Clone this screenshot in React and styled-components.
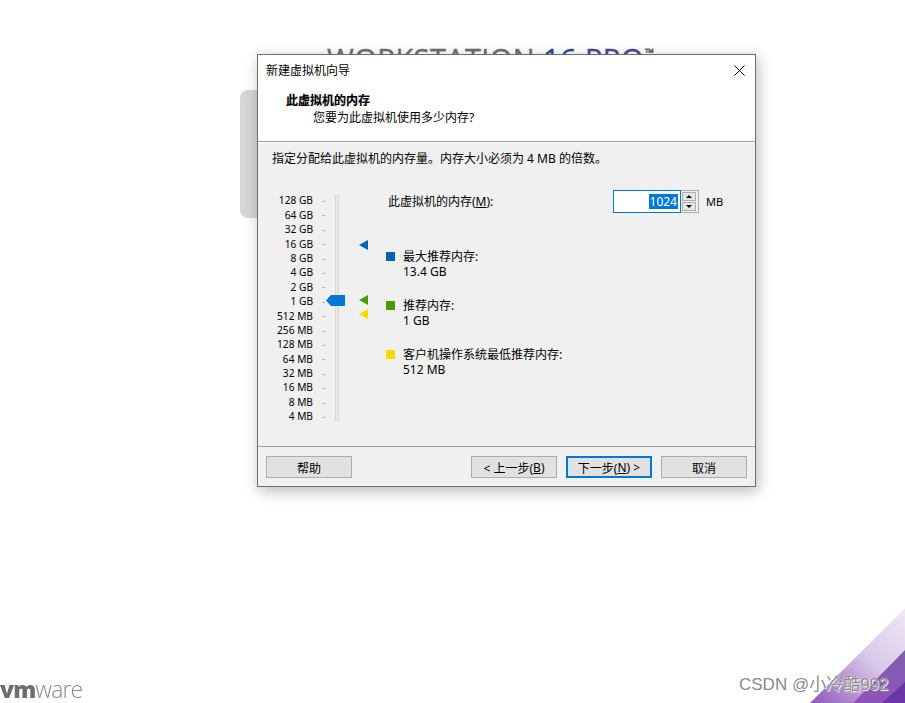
import React from "react";
import styled, { createGlobalStyle } from "styled-components";

const GlobalStyle = createGlobalStyle`
  html, body {
    margin: 0;
    padding: 0;
    background: #fff;
  }
  body {
    font-family: "Noto Sans", "Noto Sans CJK SC", sans-serif;
    font-size: 12px;
    color: #000;
  }
`;

// the page is a screenshot of a desktop: installer art with a dialog lying over it
const Desktop = styled.div`
  position: relative;
  width: 905px;
  height: 703px;
  overflow: hidden;
  background: #fff;
`;

const ProductTitle = styled.div`
  position: absolute;
  left: 327px;
  top: 41px;
  font-family: "Open Sans", sans-serif;
  font-size: 29px;
  line-height: 36px;
  letter-spacing: 0.4px;
  white-space: nowrap;
  color: #6f6f74;
  -webkit-text-stroke: 0.4px currentColor;

  b {
    font-weight: 400;
    color: #2c4a8c;
  }
  i {
    font-style: normal;
    color: #4c4a96;
  }
  sup {
    font-size: 12px;
    line-height: 0;
    vertical-align: 13px;
    margin-left: 1px;
    color: #555;
  }
`;

const BackPanel = styled.div`
  position: absolute;
  left: 240px;
  top: 90px;
  width: 60px;
  height: 128px;
  border-radius: 8px;
  background: #d6d6d6;
`;

const Logo = styled.div`
  position: absolute;
  left: 0;
  top: 675px;
  font-family: "Open Sans", sans-serif;
  font-size: 23px;
  line-height: 28px;
  letter-spacing: -0.85px;
  color: #8a8a8a;
  filter: blur(0.3px);

  b {
    font-weight: 800;
    color: #6d6d6d;
  }
  span {
    font-weight: 300;
  }
`;

const Corner = styled.svg`
  position: absolute;
  right: 0;
  bottom: 0;
  display: block;
`;

const Watermark = styled.div`
  position: absolute;
  left: 739px;
  top: 673px;
  font-family: "Liberation Sans", "Noto Sans CJK SC", sans-serif;
  font-size: 17px;
  line-height: 24px;
  white-space: nowrap;
  color: #8b8b8b;
  text-shadow: 0 0 1px #fff, 1px 1px 1px #fff;
`;

const Dialog = styled.div`
  position: absolute;
  left: 257px;
  top: 54px;
  width: 499px;
  height: 433px;
  box-sizing: border-box;
  border: 1px solid #6e6e6e;
  background: #f0f0f0;
  box-shadow: 2px 4px 14px rgba(0, 0, 0, 0.28);
  display: flex;
  flex-direction: column;
`;

const Header = styled.div`
  height: 87px;
  flex: none;
  box-sizing: border-box;
  background: #fff;
  border-bottom: 1px solid #a0a0a0;
  box-shadow: 0 1px 0 #fff;
`;

const TitleBar = styled.div`
  height: 30px;
  padding: 0 9px 0 8px;
  display: flex;
  align-items: center;
  justify-content: space-between;
`;

const CloseIcon = styled.svg`
  display: block;
  width: 11px;
  height: 11px;
  margin-right: 1px;
`;

const HeaderText = styled.div`
  padding: 7px 0 0 28px;
  line-height: 17px;
`;

const Heading = styled.div`
  font-weight: 700;
  -webkit-text-stroke: 0.2px #000;
`;

const SubHeading = styled.div`
  padding-left: 27px;
`;

const Body = styled.div`
  flex: 1;
  display: flex;
  flex-direction: column;
  padding-top: 8px;
`;

const Instruction = styled.div`
  padding-left: 14px;
  line-height: 17px;
`;

const Columns = styled.div`
  display: flex;
  margin-top: 25px;
`;

const Scale = styled.div`
  width: 55px;
  flex: none;
  padding-top: 1.4px;
  text-align: right;
`;

const ScaleLabel = styled.div`
  height: 14.4px;
  line-height: 14.4px;
  font-size: 10.2px;
  white-space: nowrap;
`;

const Slider = styled.div`
  position: relative;
  width: 73px;
  flex: none;
  height: 232px;
`;

const Tick = styled.div`
  position: absolute;
  left: 9px;
  top: ${(p) => p.$top}px;
  width: 3px;
  height: 1px;
  background: #b5b5b5;
`;

const Track = styled.div`
  position: absolute;
  left: 22px;
  top: 3px;
  width: 2px;
  height: 224px;
  border: 1px solid #d6d6d6;
  background: #e7eaea;
`;

const Thumb = styled.svg`
  position: absolute;
  left: 13px;
  top: 103px;
  display: block;
`;

const Marker = styled.div`
  position: absolute;
  left: 46px;
  top: ${(p) => p.$top}px;
  width: 0;
  height: 0;
  border-top: 5px solid transparent;
  border-bottom: 5px solid transparent;
  border-right: 9px solid ${(p) => p.$color};
`;

const Details = styled.div`
  flex: 1;
`;

const MemoryRow = styled.div`
  display: flex;
  align-items: center;
  height: 24px;
  margin-top: -3px;
  padding-left: 2px;
`;

const MemoryLabel = styled.div`
  flex: 1;
`;

const Spinner = styled.div`
  display: flex;
  height: 23px;
  box-sizing: border-box;
`;

const SpinInput = styled.div`
  width: 68px;
  box-sizing: border-box;
  border: 1px solid #0078d7;
  background: #fff;
  display: flex;
  justify-content: flex-end;
  align-items: center;
  padding-right: 2px;

  span {
    background: #0078d7;
    color: #fff;
    height: 15px;
    line-height: 15px;
    padding: 0 1px;
  }
`;

const SpinButtons = styled.div`
  width: 18px;
  box-sizing: border-box;
  border: 1px solid #adadad;
  border-left: 0;
  padding: 1px 2px 1px 1px;
  display: flex;
  flex-direction: column;
  gap: 1px;
`;

const SpinButton = styled.div`
  flex: 1;
  border: 1px solid #adadad;
  background: #e5e5e5;
  display: flex;
  align-items: center;
  justify-content: center;

  &::after {
    content: "";
    width: 0;
    height: 0;
    border-left: 3px solid transparent;
    border-right: 3px solid transparent;
    border-${(p) => (p.$down ? "top" : "bottom")}: 3px solid #000;
  }
`;

const Unit = styled.div`
  width: 56px;
  flex: none;
  padding-left: 7px;
  box-sizing: border-box;
  font-size: 11px;
`;

const Legend = styled.div`
  display: flex;
  flex-direction: column;
  gap: 19px;
  margin-top: 36px;
`;

const LegendItem = styled.div`
  display: flex;
  gap: 8px;
`;

const Swatch = styled.div`
  width: 9px;
  height: 9px;
  flex: none;
  margin-top: 3px;
  background: ${(p) => p.$color};
`;

const LegendText = styled.div`
  line-height: 15px;
`;

const Footer = styled.div`
  margin-top: auto;
  height: 40px;
  flex: none;
  box-sizing: border-box;
  border-top: 1px solid #a0a0a0;
  padding: 9px 8px 0;
  display: flex;
  gap: 9px;
`;

const Button = styled.div`
  width: 86px;
  height: 22px;
  box-sizing: border-box;
  border: ${(p) => (p.$primary ? "2px solid #0078d7" : "1px solid #adadad")};
  background: #e1e1e1;
  display: flex;
  align-items: center;
  justify-content: center;
  white-space: nowrap;
  padding-top: 1px;
  ${(p) => p.$spaced && "margin-right: 110px;"}
`;

const scaleLabels = [
  "128 GB", "64 GB", "32 GB", "16 GB", "8 GB", "4 GB", "2 GB", "1 GB",
  "512 MB", "256 MB", "128 MB", "64 MB", "32 MB", "16 MB", "8 MB", "4 MB",
];

const legend = [
  { color: "#0063b1", title: "最大推荐内存:", value: "13.4 GB" },
  { color: "#4a9a06", title: "推荐内存:", value: "1 GB" },
  { color: "#ffd800", title: "客户机操作系统最低推荐内存:", value: "512 MB" },
];

function App() {
  return (
    <Desktop>
      <GlobalStyle />
      <ProductTitle>
        WORKSTATION <b>16</b> <i>PRO</i>
        <sup>™</sup>
      </ProductTitle>
      <BackPanel />
      <Logo>
        <b>vm</b>
        <span>ware</span>
      </Logo>
      <Corner width="95" height="95" viewBox="0 0 95 95">
        <defs>
          <linearGradient id="sheet" x1="1" y1="0" x2="0" y2="1">
            <stop offset="0" stopColor="#efe8f6" />
            <stop offset="0.45" stopColor="#d9c8e8" />
            <stop offset="1" stopColor="#8f58b8" />
          </linearGradient>
          <linearGradient id="band" x1="1" y1="0" x2="0" y2="1">
            <stop offset="0" stopColor="#7e5fae" />
            <stop offset="1" stopColor="#9350bb" />
          </linearGradient>
        </defs>
        <polygon points="95,0 95,95 0,95" fill="url(#sheet)" />
        <polygon points="95,42 95,95 43,95" fill="url(#band)" />
        <polygon points="95,74 95,95 72,95" fill="#6a36a6" />
      </Corner>
      <Watermark>CSDN @小冷酷992</Watermark>

      <Dialog>
        <Header>
          <TitleBar>
            <span>新建虚拟机向导</span>
            <CloseIcon viewBox="0 0 11 11">
              <path d="M0.5 0.5 L10.5 10.5 M10.5 0.5 L0.5 10.5" stroke="#000" strokeWidth="1" fill="none" />
            </CloseIcon>
          </TitleBar>
          <HeaderText>
            <Heading>此虚拟机的内存</Heading>
            <SubHeading>您要为此虚拟机使用多少内存?</SubHeading>
          </HeaderText>
        </Header>
        <Body>
          <Instruction>指定分配给此虚拟机的内存量。内存大小必须为 4 MB 的倍数。</Instruction>
          <Columns>
            <Scale>
              {scaleLabels.map((label) => (
                <ScaleLabel key={label}>{label}</ScaleLabel>
              ))}
            </Scale>
            <Slider>
              {scaleLabels.map((label, i) => (
                <Tick key={label} $top={9 + i * 14.4} />
              ))}
              <Track />
              <Thumb width="19" height="11" viewBox="0 0 19 11">
                <polygon points="0,5.5 5,0 19,0 19,11 5,11" fill="#0078d7" />
              </Thumb>
              <Marker $top={48} $color="#0063b1" />
              <Marker $top={103} $color="#4a9a06" />
              <Marker $top={117} $color="#ffd800" />
            </Slider>
            <Details>
              <MemoryRow>
                <MemoryLabel>
                  此虚拟机的内存(<u>M</u>):
                </MemoryLabel>
                <Spinner>
                  <SpinInput>
                    <span>1024</span>
                  </SpinInput>
                  <SpinButtons>
                    <SpinButton />
                    <SpinButton $down />
                  </SpinButtons>
                </Spinner>
                <Unit>MB</Unit>
              </MemoryRow>
              <Legend>
                {legend.map((item) => (
                  <LegendItem key={item.title}>
                    <Swatch $color={item.color} />
                    <LegendText>
                      {item.title}
                      <br />
                      {item.value}
                    </LegendText>
                  </LegendItem>
                ))}
              </Legend>
            </Details>
          </Columns>
          <Footer>
            <Button $spaced>帮助</Button>
            <Button>
              &lt; 上一步(<u>B</u>)
            </Button>
            <Button $primary>
              下一步(<u>N</u>) &gt;
            </Button>
            <Button>取消</Button>
          </Footer>
        </Body>
      </Dialog>
    </Desktop>
  );
}

export default App;
